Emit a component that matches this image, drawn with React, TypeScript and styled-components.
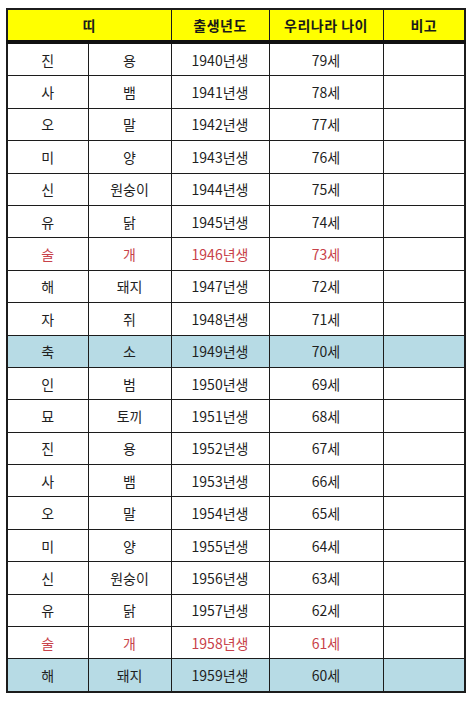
import { createGlobalStyle } from 'styled-components';
import styled from 'styled-components';

type Row = {
  branch: string;
  animal: string;
  year: number;
  age: number;
  tone?: 'red' | 'blue';
};

const rows: Row[] = [
  { branch: '진', animal: '용', year: 1940, age: 79 },
  { branch: '사', animal: '뱀', year: 1941, age: 78 },
  { branch: '오', animal: '말', year: 1942, age: 77 },
  { branch: '미', animal: '양', year: 1943, age: 76 },
  { branch: '신', animal: '원숭이', year: 1944, age: 75 },
  { branch: '유', animal: '닭', year: 1945, age: 74 },
  { branch: '술', animal: '개', year: 1946, age: 73, tone: 'red' },
  { branch: '해', animal: '돼지', year: 1947, age: 72 },
  { branch: '자', animal: '쥐', year: 1948, age: 71 },
  { branch: '축', animal: '소', year: 1949, age: 70, tone: 'blue' },
  { branch: '인', animal: '범', year: 1950, age: 69 },
  { branch: '묘', animal: '토끼', year: 1951, age: 68 },
  { branch: '진', animal: '용', year: 1952, age: 67 },
  { branch: '사', animal: '뱀', year: 1953, age: 66 },
  { branch: '오', animal: '말', year: 1954, age: 65 },
  { branch: '미', animal: '양', year: 1955, age: 64 },
  { branch: '신', animal: '원숭이', year: 1956, age: 63 },
  { branch: '유', animal: '닭', year: 1957, age: 62 },
  { branch: '술', animal: '개', year: 1958, age: 61, tone: 'red' },
  { branch: '해', animal: '돼지', year: 1959, age: 60, tone: 'blue' }
];

const GlobalStyle = createGlobalStyle`
  body {
    margin: 0;
    background: #fff;
    font-family: "Noto Sans CJK KR", "Noto Sans", sans-serif;
  }
`;

export default function App() {
  return (
    <Page>
      <GlobalStyle />
      <AgeTable>
        <colgroup>
          <col style={{ width: 81 }} />
          <col style={{ width: 83 }} />
          <col style={{ width: 98 }} />
          <col style={{ width: 114 }} />
          <col style={{ width: 82 }} />
        </colgroup>
        <thead>
          <tr>
            <HeadCell colSpan={2}>띠</HeadCell>
            <HeadCell>출생년도</HeadCell>
            <HeadCell>우리나라 나이</HeadCell>
            <HeadCell>비고</HeadCell>
          </tr>
        </thead>
        <tbody>
          {rows.map((row) => (
            <BodyRow key={row.year} $tone={row.tone}>
              <Cell>{row.branch}</Cell>
              <Cell>{row.animal}</Cell>
              <Cell>{row.year}년생</Cell>
              <Cell>{row.age}세</Cell>
              <Cell />
            </BodyRow>
          ))}
        </tbody>
      </AgeTable>
    </Page>
  );
}

const Page = styled.div`
  padding: 8px 0 0 6px;
`;

const AgeTable = styled.table`
  width: 458px;
  table-layout: fixed;
  border-collapse: collapse;
  border: 2px solid #1c1c1c;
`;

const HeadCell = styled.th`
  height: 30px;
  padding: 0;
  background: #ffff00;
  border: 1px solid #1c1c1c;
  border-bottom: 4px solid #111;
  font-size: 14px;
  font-weight: 700;
  color: #1a1a1a;
  text-align: center;
  letter-spacing: 0.5px;
`;

const BodyRow = styled.tr<{ $tone?: 'red' | 'blue' }>`
  background: ${({ $tone }) => ($tone === 'blue' ? '#b7dbe5' : '#fff')};
  color: ${({ $tone }) => ($tone === 'red' ? '#c8424a' : '#1f1f1f')};
`;

const Cell = styled.td`
  height: 31.4px;
  padding: 0;
  border: 1px solid #1c1c1c;
  border-width: 1px 1.5px;
  font-size: 14px;
  text-align: center;
`;
